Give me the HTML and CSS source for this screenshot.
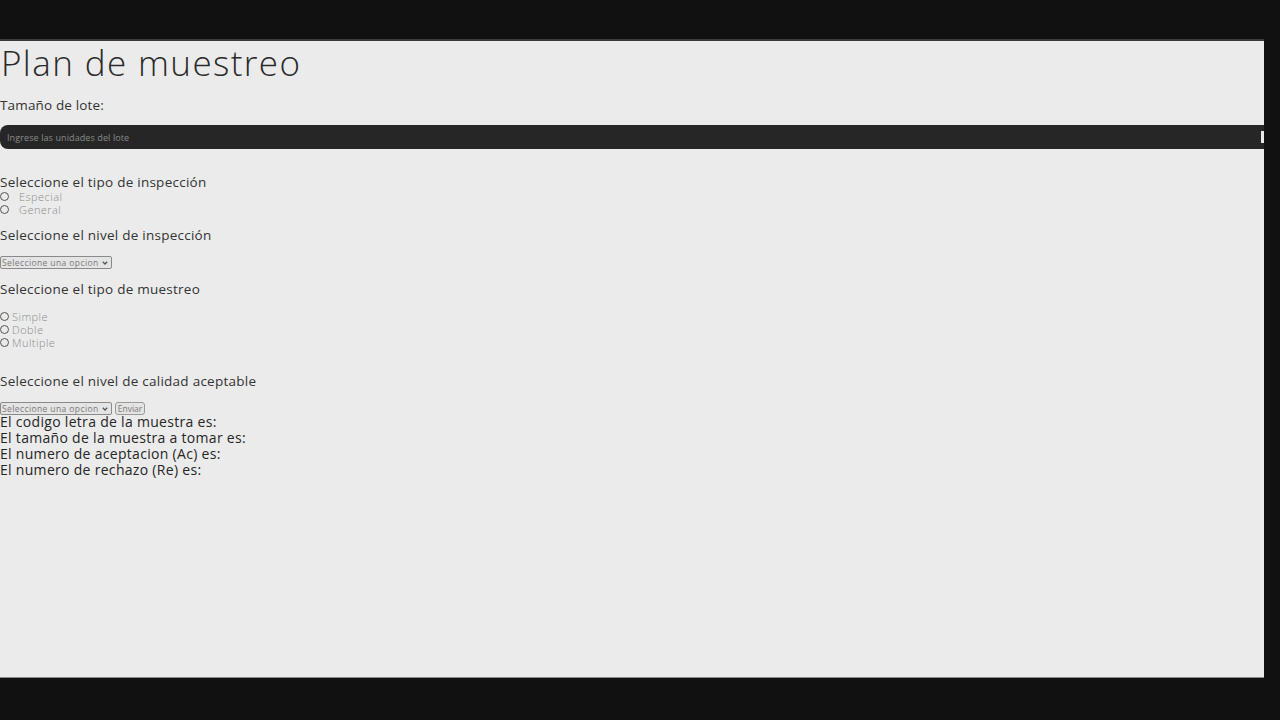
FILE: index.html
```html
<!DOCTYPE html>
<html lang="es">
<head>
<meta charset="utf-8">
<title>Plan de muestreo</title>
<link rel="stylesheet" href="styles.css">
</head>
<body>
<div class="page">
  <h1 class="title">Plan de muestreo</h1>
  <label class="lbl-lote" for="lote">Tamaño de lote:</label>
  <div class="field">
    <input id="lote" class="field-input" type="text" placeholder="Ingrese las unidades del lote">
    <span class="field-chip"></span>
  </div>

  <p class="question q1">Seleccione el tipo de inspección</p>
  <div class="radios">
    <label class="radio-row"><input type="radio" name="tipo" class="radio"><span class="radio-text wide">Especial</span></label>
    <label class="radio-row"><input type="radio" name="tipo" class="radio"><span class="radio-text wide">General</span></label>
  </div>

  <p class="question q2">Seleccione el nivel de inspección</p>
  <div class="ctrl-row r1">
    <div class="sel-wrap">
      <select class="sel"><option>Seleccione una opcion</option></select>
      <svg class="chev" width="6" height="4" viewBox="0 0 6 4"><path d="M0.8 0.8 L3 3 L5.2 0.8" fill="none" stroke="#555" stroke-width="1.3"/></svg>
    </div>
  </div>

  <p class="question q3">Seleccione el tipo de muestreo</p>
  <div class="radios r2">
    <label class="radio-row"><input type="radio" name="muestreo" class="radio"><span class="radio-text">Simple</span></label>
    <label class="radio-row"><input type="radio" name="muestreo" class="radio"><span class="radio-text">Doble</span></label>
    <label class="radio-row"><input type="radio" name="muestreo" class="radio"><span class="radio-text">Multiple</span></label>
  </div>

  <p class="question q4">Seleccione el nivel de calidad aceptable</p>
  <div class="ctrl-row r3">
    <div class="sel-wrap">
      <select class="sel"><option>Seleccione una opcion</option></select>
      <svg class="chev" width="6" height="4" viewBox="0 0 6 4"><path d="M0.8 0.8 L3 3 L5.2 0.8" fill="none" stroke="#555" stroke-width="1.3"/></svg>
    </div>
    <button class="btn" type="button">Enviar</button>
  </div>

  <div class="results">
    <p class="result">El codigo letra de la muestra es:</p>
    <p class="result">El tamaño de la muestra a tomar es:</p>
    <p class="result">El numero de aceptacion (Ac) es:</p>
    <p class="result">El numero de rechazo (Re) es:</p>
  </div>
</div>
</body>
</html>
```
FILE: styles.css
```css
html, body {
  margin: 0;
  padding: 0;
  background: #111111;
  height: 720px;
  overflow: hidden;
}
body {
  font-family: "Open Sans", "DejaVu Sans", sans-serif;
  font-weight: 300;
}
.page {
  margin-top: 39px;
  width: 1264px;
  height: 636px;
  background: #ebebeb;
  border-top: 2px solid #3a3a3a;
  border-bottom: 1px solid #8a8a8a;
  display: flex;
  flex-direction: column;
  align-items: flex-start;
}
.title {
  margin: 2px 0 0 1px;
  font-size: 35px;
  line-height: 40px;
  font-weight: 300;
  color: #2a2a2a;
  letter-spacing: 1.4px;
}
.lbl-lote {
  margin-top: 12px;
  display: block;
  font-size: 13.5px;
  line-height: 20px;
  color: #333;
  font-weight: 400;
  letter-spacing: 0.15px;
}
.field {
  margin-top: 10px;
  width: 1264px;
  height: 24px;
  background: #262626;
  border-radius: 8px 0 0 8px;
  display: flex;
  align-items: center;
}
.field-input {
  flex: 1;
  border: none;
  background: transparent;
  outline: none;
  padding: 0 0 0 7px;
  margin: 0;
  height: 24px;
  font-family: inherit;
  font-size: 9px;
  letter-spacing: 0.1px;
  color: #ddd;
}
.field-input::placeholder {
  color: #8a8a8a;
}
.field-chip {
  width: 3px;
  height: 12px;
  background: #e8e8e8;
}
.question {
  margin: 0;
  font-size: 13.5px;
  line-height: 16px;
  color: #333;
  font-weight: 400;
  letter-spacing: 0.25px;
}
.q1 { margin-top: 25px; }
.q2 { margin-top: 11px; }
.q3 { margin-top: 12px; }
.q4 { margin-top: 24px; }
.radios {
  display: flex;
  flex-direction: column;
}
.r2 { margin-top: 13px; }
.radio-row {
  display: flex;
  align-items: center;
  height: 13px;
  line-height: 12px;
}
.radio {
  appearance: none;
  -webkit-appearance: none;
  width: 9px;
  height: 9px;
  margin: 0;
  border: 1px solid #555;
  border-radius: 50%;
  background: transparent;
  box-sizing: border-box;
}
.radio-text {
  font-size: 11px;
  color: #8c8c8c;
  margin-left: 3px;
  letter-spacing: 0.45px;
}
.radio-text.wide {
  margin-left: 10px;
}
.ctrl-row {
  display: flex;
  gap: 3px;
  height: 13px;
  align-items: flex-start;
}
.r1 { margin-top: 13px; }
.r3 { margin-top: 13px; height: 12px; }
.sel-wrap {
  position: relative;
  width: 112px;
  height: 13px;
}
.sel {
  display: block;
  appearance: none;
  -webkit-appearance: none;
  width: 112px;
  height: 13px;
  margin: 0;
  padding: 0 0 0 1px;
  font-family: inherit;
  font-size: 8.5px;
  line-height: 11px;
  letter-spacing: 0.4px;
  color: #7a7a7a;
  background: #e4e4e4;
  border: 1px solid #8a8a8a;
  border-radius: 2px;
  box-sizing: border-box;
}
.chev {
  position: absolute;
  right: 4px;
  top: 5px;
}
.btn {
  display: block;
  width: 30px;
  height: 13px;
  margin: 0;
  padding: 0;
  font-family: inherit;
  font-size: 8.5px;
  line-height: 11px;
  color: #7a7a7a;
  background: #e4e4e4;
  border: 1px solid #9a9a9a;
  border-radius: 3px;
  box-sizing: border-box;
}
.results {
  display: flex;
  flex-direction: column;
}
.result {
  margin: 0;
  font-size: 14px;
  line-height: 16px;
  color: #262626;
  font-weight: 400;
  letter-spacing: 0.3px;
}
```
